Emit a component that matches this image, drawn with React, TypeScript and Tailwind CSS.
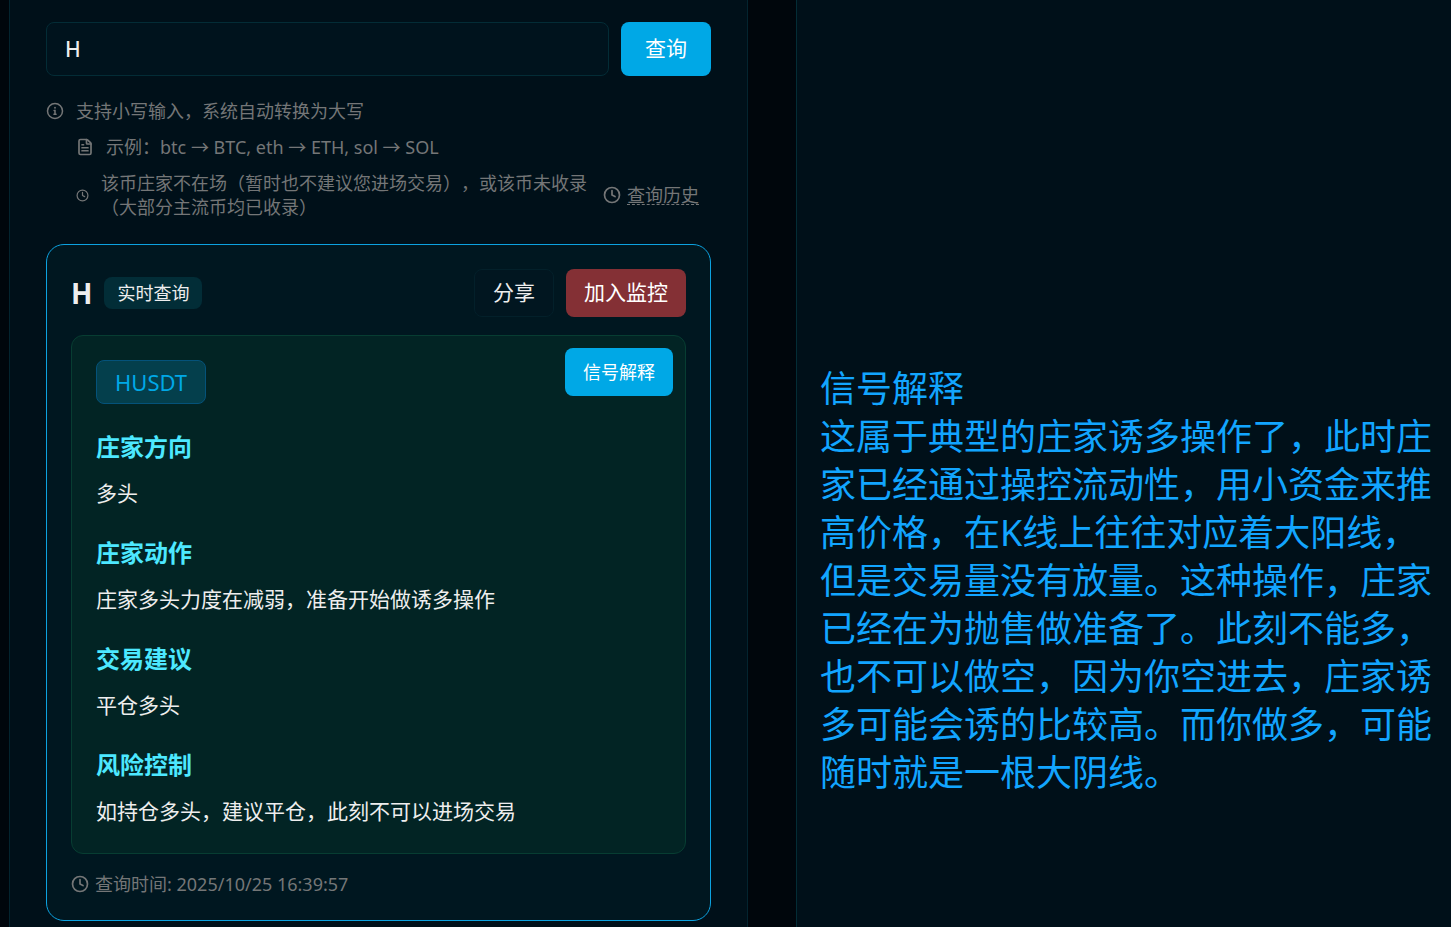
import { useState } from "react";
import { Clock, FileText } from "lucide-react";

const sections = [
  { title: "庄家方向", text: "多头" },
  { title: "庄家动作", text: "庄家多头力度在减弱，准备开始做诱多操作" },
  { title: "交易建议", text: "平仓多头" },
  { title: "风险控制", text: "如持仓多头，建议平仓，此刻不可以进场交易" },
];

// info circle with a serif "i"
function InfoIcon() {
  return (
    <svg
      width="18"
      height="18"
      viewBox="0 0 24 24"
      fill="none"
      stroke="currentColor"
      strokeWidth="2"
      strokeLinecap="round"
      className="shrink-0"
      aria-hidden="true"
    >
      <circle cx="12" cy="12" r="10" />
      <path d="M10.8 11.2H12V16" />
      <path d="M10.6 16.2h2.8" />
      <path d="M12 7.6v.2" strokeWidth="2.4" />
    </svg>
  );
}

function SearchBar() {
  const [symbol, setSymbol] = useState("H");

  return (
    <form className="flex gap-3" onSubmit={(e) => e.preventDefault()}>
      <input
        type="text"
        aria-label="币种"
        value={symbol}
        onChange={(e) => setSymbol(e.target.value.toUpperCase())}
        className="h-[54px] min-w-0 flex-1 rounded-lg border border-[#032c36] bg-[#00131d] px-[18px] text-[21px] font-medium text-[#eeeeee] outline-none"
      />
      <button type="submit" className="h-[54px] w-[90px] rounded-lg bg-[#00a8e6] text-[21px] text-white">
        查询
      </button>
    </form>
  );
}

function Hints() {
  return (
    <div className="mt-[23px] text-lg leading-6 text-[#747677]">
      <p className="flex items-center gap-3">
        <InfoIcon />
        支持小写输入，系统自动转换为大写
      </p>
      <p className="mt-3 flex items-center gap-3 pl-[30px]">
        <FileText size={18} strokeWidth={2.25} />
        示例：btc → BTC, eth → ETH, sol → SOL
      </p>
      <div className="mt-3 flex items-center pl-[30px]">
        <Clock size={13} strokeWidth={2.25} className="shrink-0" />
        <p className="ml-3 w-[490px] shrink-0 [text-spacing-trim:space-all]">
          该币庄家不在场（暂时也不建议您进场交易），或该币未收录
          <br />
          （大部分主流币均已收录）
        </p>
        <a href="#history" className="ml-3 flex shrink-0 items-center gap-[6px]">
          <Clock size={18} strokeWidth={2.25} />
          <span className="underline decoration-dashed decoration-1 underline-offset-2">查询历史</span>
        </a>
      </div>
    </div>
  );
}

function SignalPanel() {
  return (
    <div className="mt-[18px] rounded-xl border border-[#073d32] bg-[#022424] pt-3 pr-3 pb-[26px] pl-6">
      <div className="flex items-start justify-between">
        <span className="mt-3 flex h-11 items-center rounded-lg border border-[#04527a] bg-[#043f4c] px-[18px] text-[22px] text-[#00a8e6]">
          HUSDT
        </span>
        <button type="button" className="h-12 w-[108px] rounded-lg bg-[#00a8e6] text-lg text-white">
          信号解释
        </button>
      </div>
      <div className="mt-[25px] flex flex-col gap-[26px]">
        {sections.map((s) => (
          <section key={s.title}>
            <h3 className="text-2xl leading-9 font-bold text-[#4de8ff]">{s.title}</h3>
            <p className="mt-3 text-[21px] leading-8 text-[#eeeeee]">{s.text}</p>
          </section>
        ))}
      </div>
    </div>
  );
}

function ResultCard() {
  return (
    <article className="mt-[25px] rounded-[18px] border border-[#0ca2e0] bg-[#001720] p-6">
      <div className="flex items-center">
        <h2 className="text-[28px] leading-10 font-bold text-[#eeeeee]">H</h2>
        <span className="ml-3 flex h-8 items-center rounded-lg bg-[#022d37] px-[13px] text-lg text-[#eeeeee]">
          实时查询
        </span>
        <button
          type="button"
          className="ml-auto h-12 w-20 rounded-lg border border-[#03202a] bg-[#011620] text-[21px] text-[#eeeeee]"
        >
          分享
        </button>
        <button type="button" className="ml-3 h-12 w-[120px] rounded-lg bg-[#843035] text-[21px] text-white">
          加入监控
        </button>
      </div>
      <SignalPanel />
      <p className="mt-[18px] flex items-center gap-[6px] text-lg leading-6 text-[#747677]">
        <Clock size={18} strokeWidth={2.25} />
        查询时间: 2025/10/25 16:39:57
      </p>
    </article>
  );
}

export default function App() {
  return (
    <div className="grid min-h-screen grid-cols-[739fr_655fr] gap-12 overflow-hidden bg-[#00060c] pl-[9px] font-['Noto_Sans','Noto_Sans_CJK_SC',sans-serif]">
      <main className="min-w-0 border-x border-[#03242f] bg-[#001019] px-9 pt-[22px]">
        <SearchBar />
        <Hints />
        <ResultCard />
      </main>
      <aside className="flex min-w-0 items-center border-l border-[#032c36] bg-[#001019] pr-3 pl-[23px]">
        <div className="mt-[234px] text-4xl leading-[48px] text-[#12a5ff]">
          <h2>信号解释</h2>
          <p>
            这属于典型的庄家诱多操作了，此时庄家已经通过操控流动性，用小资金来推高价格，在K线上往往对应着大阳线，但是交易量没有放量。这种操作，庄家已经在为抛售做准备了。此刻不能多，也不可以做空，因为你空进去，庄家诱多可能会诱的比较高。而你做多，可能随时就是一根大阴线。
          </p>
        </div>
      </aside>
    </div>
  );
}
